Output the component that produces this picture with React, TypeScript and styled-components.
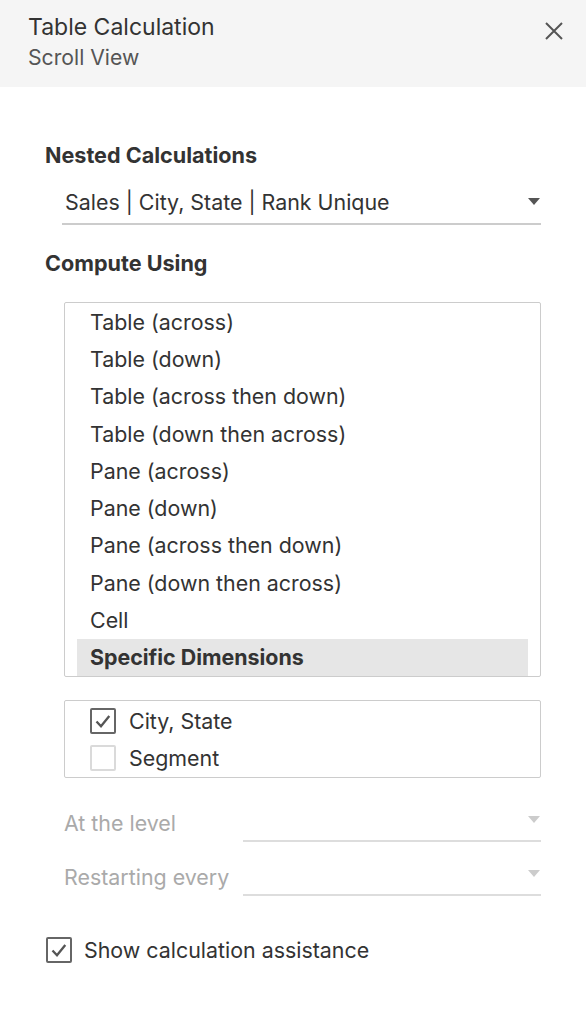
import React from "react";
import styled, { createGlobalStyle } from "styled-components";

const GlobalStyle = createGlobalStyle`
    body {
        margin: 0;
        background: #ffffff;
        font-family: Inter, "Open Sans", "Liberation Sans", sans-serif;
        color: #333333;
    }
`

const Panel = styled.div`
    width: 586px;
    min-height: 1024px;
    background: #ffffff;
`

const Header = styled.div`
    height: 87px;
    box-sizing: border-box;
    background: #f5f5f5;
    padding: 12px 20px 0 28px;
    display: flex;
    justify-content: space-between;
    align-items: flex-start;
`

const Title = styled.div`
    font-size: 23px;
    line-height: 30px;
    color: #333333;
`

const Subtitle = styled.div`
    font-size: 21.2px;
    line-height: 31px;
    color: #555555;
`

const CloseButton = styled.button`
    border: none;
    background: none;
    padding: 0;
    margin-top: 7px;
    width: 24px;
    height: 24px;
    cursor: pointer;
`

const Body = styled.div`
    padding: 55px 45px 0 45px;
`

const SectionLabel = styled.div`
    font-size: 21.6px;
    font-weight: 700;
    line-height: 26px;
    color: #333333;
`

const Select = styled.div<{ $disabled?: boolean }>`
    flex: 1;
    height: ${p => p.$disabled ? "40px" : "44px"};
    box-sizing: border-box;
    border-bottom: 2px solid ${p => p.$disabled ? "#dddddd" : "#cccccc"};
    display: flex;
    align-items: center;
    justify-content: space-between;
    padding: 0 0 0 3px;
    font-size: 21.4px;
    color: #333333;
`

const Arrow = styled.span<{ $disabled?: boolean }>`
    width: 0;
    height: 0;
    border-left: 6px solid transparent;
    border-right: 6px solid transparent;
    border-top: 7px solid ${p => p.$disabled ? "#cccccc" : "#555555"};
    margin-right: 1px;
    margin-top: -2px;
`

const NestedRow = styled.div`
    display: flex;
    margin: 13px 0 0 17px;
`

const ComputeLabel = styled(SectionLabel)`
    margin-top: 25px;
`

const ListBox = styled.div`
    margin: 26px 0 0 19px;
    border: 1px solid #cccccc;
    border-radius: 2px;
    padding-right: 12px;
    overflow: hidden;
`

const ListItem = styled.div<{ $selected?: boolean }>`
    height: 37.3px;
    display: flex;
    align-items: center;
    padding-left: 13px;
    margin-left: 12px;
    font-size: 21.4px;
    color: #333333;
    font-weight: ${p => p.$selected ? 700 : 400};
    background: ${p => p.$selected ? "#e6e6e6" : "transparent"};
`

const DimensionBox = styled.div`
    margin: 23px 0 0 19px;
    border: 1px solid #cccccc;
    border-radius: 2px;
    padding: 1px 0 0;
`

const DimensionRow = styled.label`
    height: 37.5px;
    display: flex;
    align-items: center;
    gap: 13px;
    padding-left: 25px;
    font-size: 21.4px;
    color: #333333;
`

const Box = styled.span<{ $checked?: boolean }>`
    width: 26px;
    height: 26px;
    box-sizing: border-box;
    border: 2px solid ${p => p.$checked ? "#666666" : "#dadada"};
    border-radius: 2px;
    display: flex;
    align-items: center;
    justify-content: center;
    flex-shrink: 0;
`

const LevelRow = styled.div`
    display: flex;
    align-items: flex-end;
    height: 54px;
    margin-left: 19px;
`

const LevelLabel = styled.div`
    width: 179px;
    font-size: 21.4px;
    color: #aaaaaa;
    padding-bottom: 6px;
`

const Levels = styled.div`
    margin-top: 10px;
`

const AssistRow = styled.label`
    display: flex;
    align-items: center;
    gap: 12px;
    margin: 41px 0 0 1px;
    font-size: 21.4px;
    color: #333333;
`

const listItems = [
    "Table (across)",
    "Table (down)",
    "Table (across then down)",
    "Table (down then across)",
    "Pane (across)",
    "Pane (down)",
    "Pane (across then down)",
    "Pane (down then across)",
    "Cell",
]

const Checkbox = ({ checked }: { checked?: boolean }) => (
    <Box $checked={checked}>
        {checked && (
            <svg width="22" height="22" viewBox="0 0 22 22">
                <path d="M4.5 11.5 L9 16.3 L17.3 6" fill="none" stroke="#555555" strokeWidth="2.3" />
            </svg>
        )}
    </Box>
)

export const App = () => {
    return (
        <Panel>
            <GlobalStyle />
            <Header>
                <div>
                    <Title>Table Calculation</Title>
                    <Subtitle>Scroll View</Subtitle>
                </div>
                <CloseButton aria-label="Close">
                    <svg width="24" height="24" viewBox="0 0 24 24">
                        <path d="M4 4 L20 20 M20 4 L4 20" stroke="#555555" strokeWidth="2" />
                    </svg>
                </CloseButton>
            </Header>
            <Body>
                <SectionLabel>Nested Calculations</SectionLabel>
                <NestedRow>
                    <Select>
                        Sales | City, State | Rank Unique
                        <Arrow />
                    </Select>
                </NestedRow>
                <ComputeLabel>Compute Using</ComputeLabel>
                <ListBox>
                    {listItems.map(item => <ListItem key={item}>{item}</ListItem>)}
                    <ListItem $selected>Specific Dimensions</ListItem>
                </ListBox>
                <DimensionBox>
                    <DimensionRow>
                        <Checkbox checked />
                        City, State
                    </DimensionRow>
                    <DimensionRow>
                        <Checkbox />
                        Segment
                    </DimensionRow>
                </DimensionBox>
                <Levels>
                    <LevelRow>
                        <LevelLabel>At the level</LevelLabel>
                        <Select $disabled><span /><Arrow $disabled /></Select>
                    </LevelRow>
                    <LevelRow>
                        <LevelLabel>Restarting every</LevelLabel>
                        <Select $disabled><span /><Arrow $disabled /></Select>
                    </LevelRow>
                </Levels>
                <AssistRow>
                    <Checkbox checked />
                    Show calculation assistance
                </AssistRow>
            </Body>
        </Panel>
    )
}

export default App;
